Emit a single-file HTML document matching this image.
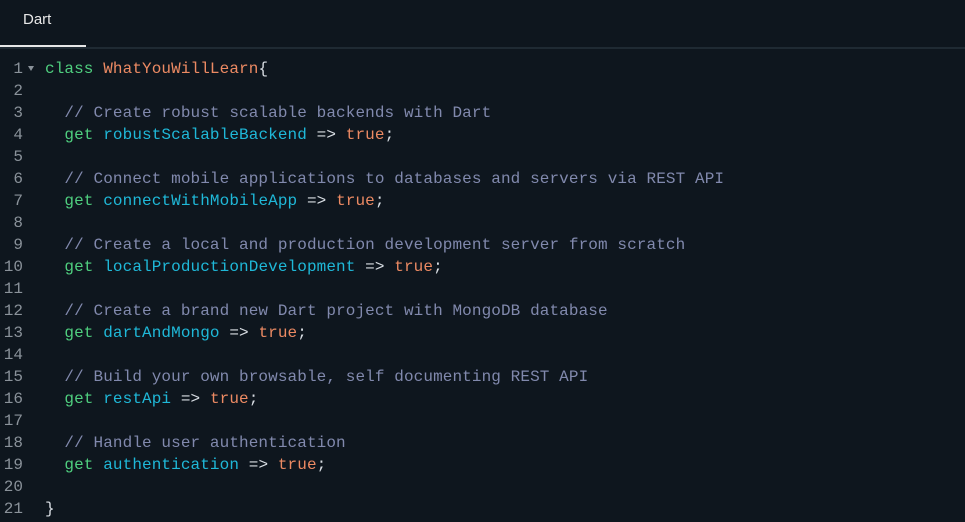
<!DOCTYPE html>
<html><head><style>
body{margin:0;background:#0e161e;width:965px;height:522px;overflow:hidden;font-family:"Liberation Mono",monospace;}
.tabs{height:47px;position:relative;border-bottom:2px solid #1f2a33;}
.tab{position:absolute;left:0;top:0;width:86px;height:45px;border-bottom:2px solid #e6e6e6;color:#e8e8e8;font-family:"Liberation Sans",sans-serif;font-size:15px;line-height:40px;text-indent:23px;}
.code{position:absolute;top:58px;left:0;font-size:16px;line-height:22px;}
.ln{position:absolute;left:0;width:23px;text-align:right;color:#8a929a;}
.tx{position:absolute;left:45px;white-space:pre;color:#d8dde3;letter-spacing:0.1px;}
.k{color:#4fcf7f}.c{color:#8189ad}.f{color:#1fb8d8}.o{color:#ec8a63}
.arr{position:absolute;left:28px;top:8px;width:0;height:0;border-left:3.5px solid transparent;border-right:3.5px solid transparent;border-top:5px solid #8a929a;}
</style></head><body>
<div class="tabs"><div class="tab">Dart</div></div>
<div class="code">
<div class="ln">1<br>2<br>3<br>4<br>5<br>6<br>7<br>8<br>9<br>10<br>11<br>12<br>13<br>14<br>15<br>16<br>17<br>18<br>19<br>20<br>21</div>
<div class="arr"></div>
<div class="tx"><span class="k">class</span> <span class="o">WhatYouWillLearn</span>{

  <span class="c">// Create robust scalable backends with Dart</span>
  <span class="k">get</span> <span class="f">robustScalableBackend</span> =&gt; <span class="o">true</span>;

  <span class="c">// Connect mobile applications to databases and servers via REST API</span>
  <span class="k">get</span> <span class="f">connectWithMobileApp</span> =&gt; <span class="o">true</span>;

  <span class="c">// Create a local and production development server from scratch</span>
  <span class="k">get</span> <span class="f">localProductionDevelopment</span> =&gt; <span class="o">true</span>;

  <span class="c">// Create a brand new Dart project with MongoDB database</span>
  <span class="k">get</span> <span class="f">dartAndMongo</span> =&gt; <span class="o">true</span>;

  <span class="c">// Build your own browsable, self documenting REST API</span>
  <span class="k">get</span> <span class="f">restApi</span> =&gt; <span class="o">true</span>;

  <span class="c">// Handle user authentication</span>
  <span class="k">get</span> <span class="f">authentication</span> =&gt; <span class="o">true</span>;

}</div>
</div>
</body></html>
